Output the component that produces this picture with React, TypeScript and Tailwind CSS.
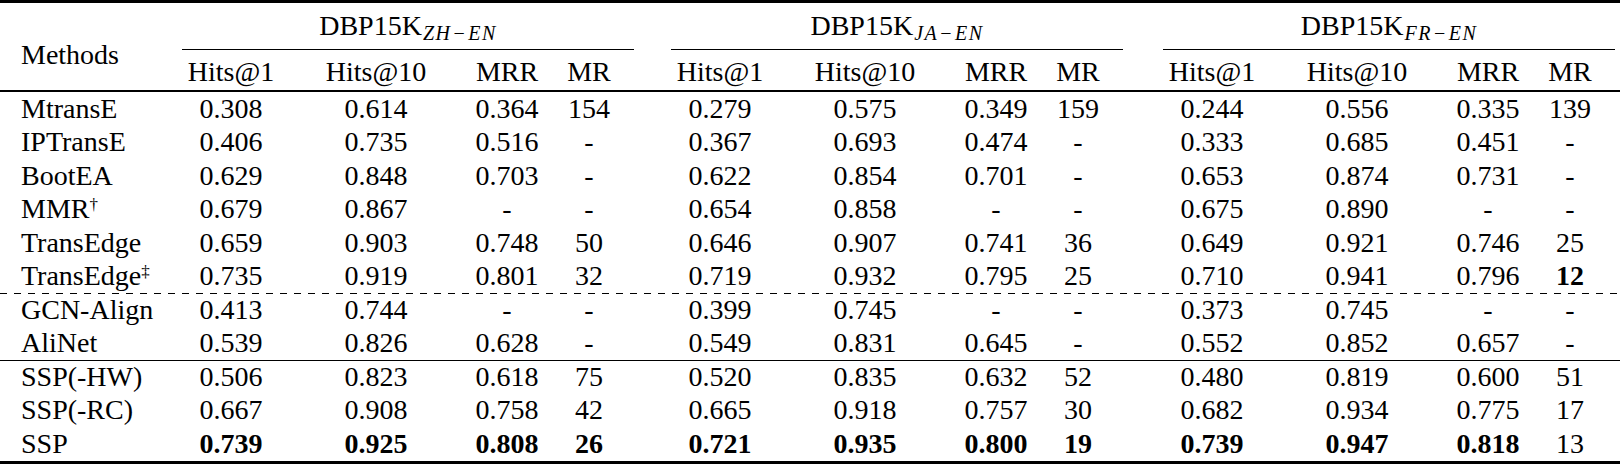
import React from "react";

type Cell = { v: string; b?: boolean };
type Row = { name: React.ReactNode; groups: Cell[][] };

const cols = ["w-[100px]", "w-[190px]", "w-[72px]", "w-[92px]"];

const c = (s: string): Cell[] =>
  s.split(" ").map((v) => (v.startsWith("*") ? { v: v.slice(1), b: true } : { v }));

const rows: Row[] = [
  { name: "MtransE", groups: [c("0.308 0.614 0.364 154"), c("0.279 0.575 0.349 159"), c("0.244 0.556 0.335 139")] },
  { name: "IPTransE", groups: [c("0.406 0.735 0.516 -"), c("0.367 0.693 0.474 -"), c("0.333 0.685 0.451 -")] },
  { name: "BootEA", groups: [c("0.629 0.848 0.703 -"), c("0.622 0.854 0.701 -"), c("0.653 0.874 0.731 -")] },
  {
    name: (
      <>
        MMR<sup className="text-[17px]">†</sup>
      </>
    ),
    groups: [c("0.679 0.867 - -"), c("0.654 0.858 - -"), c("0.675 0.890 - -")],
  },
  { name: "TransEdge", groups: [c("0.659 0.903 0.748 50"), c("0.646 0.907 0.741 36"), c("0.649 0.921 0.746 25")] },
  {
    name: (
      <>
        TransEdge<sup className="text-[17px]">‡</sup>
      </>
    ),
    groups: [c("0.735 0.919 0.801 32"), c("0.719 0.932 0.795 25"), c("0.710 0.941 0.796 *12")],
  },
  { name: "GCN-Align", groups: [c("0.413 0.744 - -"), c("0.399 0.745 - -"), c("0.373 0.745 - -")] },
  { name: "AliNet", groups: [c("0.539 0.826 0.628 -"), c("0.549 0.831 0.645 -"), c("0.552 0.852 0.657 -")] },
  { name: "SSP(-HW)", groups: [c("0.506 0.823 0.618 75"), c("0.520 0.835 0.632 52"), c("0.480 0.819 0.600 51")] },
  { name: "SSP(-RC)", groups: [c("0.667 0.908 0.758 42"), c("0.665 0.918 0.757 30"), c("0.682 0.934 0.775 17")] },
  { name: "SSP", groups: [c("*0.739 *0.925 *0.808 *26"), c("*0.721 *0.935 *0.800 *19"), c("*0.739 *0.947 *0.818 13")] },
];

const Gap = ({ i }: { i: number }) =>
  i === 0 ? <div className="w-[35px] shrink-0" /> : i === 1 ? <div className="w-[38px] shrink-0" /> : null;

const GroupHead = ({ sub }: { sub: string }) => {
  const [a, b] = sub.split("-");
  return (
    <div className="flex w-[454px] shrink-0 flex-col">
      <div className="flex h-[46px] items-center justify-center pb-[1px]">
        <span>
          DBP15K
          <sub className="ml-[1px] text-[20px] italic tracking-[1.5px]">
            {a}
            <span className="mx-[2px] not-italic">−</span>
            {b}
          </sub>
        </span>
      </div>
      <div className="mx-[1px] h-px bg-black" />
      <div className="flex h-[40px] items-center pt-[3px]">
        {["Hits@1", "Hits@10", "MRR", "MR"].map((h, k) => (
          <div key={k} className={`${cols[k]} shrink-0 text-center`}>
            {h}
          </div>
        ))}
      </div>
    </div>
  );
};

const DataRow = ({ row, h }: { row: Row; h: string }) => (
  <div className={`flex ${h} items-center`}>
    <div className="w-[181px] shrink-0 pl-[21px]">{row.name}</div>
    {row.groups.map((g, i) => (
      <React.Fragment key={i}>
        <div className="flex w-[454px] shrink-0">
          {g.map((cell, k) => (
            <div key={k} className={`${cols[k]} shrink-0 text-center ${cell.b ? "font-bold" : ""}`}>
              {cell.v}
            </div>
          ))}
        </div>
        <Gap i={i} />
      </React.Fragment>
    ))}
  </div>
);

const Dashed = () => (
  <div className="h-px w-full bg-[repeating-linear-gradient(90deg,#000_0_7px,transparent_7px_14px)]" />
);

export default function App() {
  return (
    <div className="h-[467px] w-[1620px] overflow-hidden bg-white text-[28px] leading-none text-black [font-family:'Liberation_Serif',serif]">
      <div className="h-[3px] bg-black" />
      <div className="flex h-[87px]">
        <div className="flex w-[181px] shrink-0 items-center pl-[21px] pt-[16px]">Methods</div>
        <GroupHead sub="ZH-EN" />
        <div className="w-[35px] shrink-0" />
        <GroupHead sub="JA-EN" />
        <div className="w-[38px] shrink-0" />
        <GroupHead sub="FR-EN" />
      </div>
      <div className="h-[2px] bg-black" />
      {rows.map((r, i) => (
        <React.Fragment key={i}>
          {i === 6 && <Dashed />}
          {i === 8 && <div className="h-px bg-black" />}
          <DataRow row={r} h={i === 6 || i === 8 ? "h-[32.5px]" : "h-[33.5px]"} />
        </React.Fragment>
      ))}
      <div className="h-[3px] bg-black" />
    </div>
  );
}
